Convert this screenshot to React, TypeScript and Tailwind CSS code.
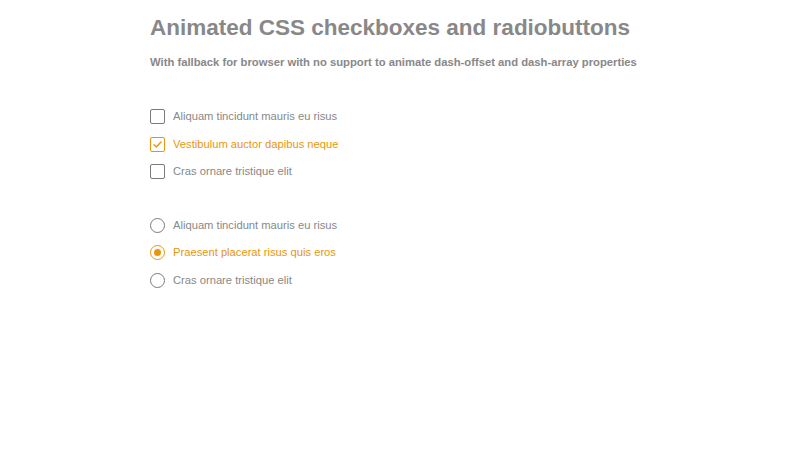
import React from "react";

const gray = "#888888";
const orange = "#e8960f";

function CheckRow({ label, checked }: { label: string; checked?: boolean }) {
  return (
    <label className="flex items-center h-[27.5px] cursor-pointer">
      <span
        className={`w-[15px] h-[15px] rounded-[2px] border-[1.5px] flex items-center justify-center ${
          checked ? "border-[#e8960f]" : "border-[#7a7a7a]"
        }`}
      >
        {checked && (
          <svg width="11" height="11" viewBox="0 0 11 11" fill="none">
            <path d="M2 5.8 L4.3 8 L9 3" stroke={orange} strokeWidth="1.4" strokeLinecap="round" strokeLinejoin="round" />
          </svg>
        )}
      </span>
      <span className="ml-[8px] text-[11.2px]" style={{ color: checked ? orange : gray }}>
        {label}
      </span>
    </label>
  );
}

function RadioRow({ label, checked }: { label: string; checked?: boolean }) {
  return (
    <label className="flex items-center h-[27.5px] cursor-pointer">
      <span
        className={`w-[15px] h-[15px] rounded-full border-[1.5px] flex items-center justify-center ${
          checked ? "border-[#e8960f]" : "border-[#7a7a7a]"
        }`}
      >
        {checked && <span className="w-[7px] h-[7px] rounded-full bg-[#e8960f]" />}
      </span>
      <span className="ml-[8px] text-[11.2px]" style={{ color: checked ? orange : gray }}>
        {label}
      </span>
    </label>
  );
}

export default function App() {
  return (
    <div className="w-[800px] h-[450px] bg-white font-['Liberation_Sans',Arial,sans-serif]">
      <div className="pl-[150px] pt-[13px]">
        <h1 className="font-bold text-[22.5px] leading-[30px] text-[#888888]">
          Animated CSS checkboxes and radiobuttons
        </h1>
        <p className="mt-[10px] font-bold text-[11.25px] leading-[18px] text-[#888888]">
          With fallback for browser with no support to animate dash-offset and dash-array properties
        </p>
        <div className="mt-[32px] flex flex-col">
          <CheckRow label="Aliquam tincidunt mauris eu risus" />
          <CheckRow label="Vestibulum auctor dapibus neque" checked />
          <CheckRow label="Cras ornare tristique elit" />
        </div>
        <div className="mt-[26px] flex flex-col">
          <RadioRow label="Aliquam tincidunt mauris eu risus" />
          <RadioRow label="Praesent placerat risus quis eros" checked />
          <RadioRow label="Cras ornare tristique elit" />
        </div>
      </div>
    </div>
  );
}
